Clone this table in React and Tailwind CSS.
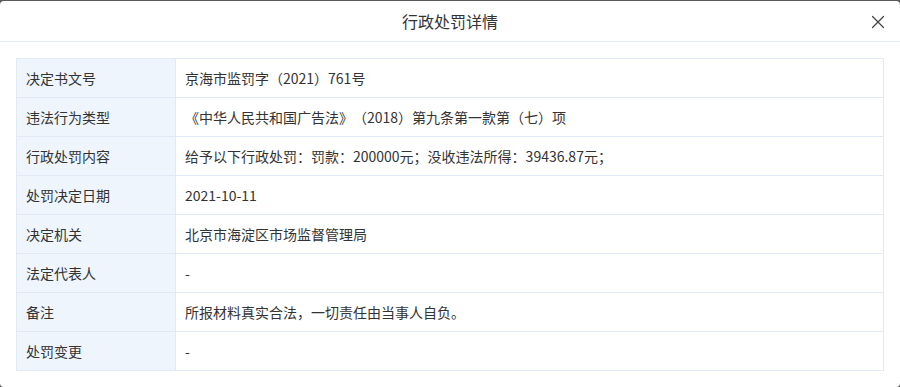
import { X } from 'lucide-react'

// Detail rows
const rows = [
    ['决定书文号', '京海市监罚字（2021）761号'],
    ['违法行为类型', '《中华人民共和国广告法》（2018）第九条第一款第（七）项'],
    ['行政处罚内容', '给予以下行政处罚：罚款：200000元；没收违法所得：39436.87元；'],
    ['处罚决定日期', '2021-10-11'],
    ['决定机关', '北京市海淀区市场监督管理局'],
    ['法定代表人', '-'],
    ['备注', '所报材料真实合法，一切责任由当事人自负。'],
    ['处罚变更', '-'],
]

function App() {
    return (
        <div
            className="h-[387px] w-[900px] bg-[#5a5a5a] pt-px [text-spacing-trim:space-all]"
            style={{ fontFamily: '"Noto Sans CJK SC", "Noto Sans", sans-serif' }}
        >
            <div className="h-full bg-white rounded-[4px] flex flex-col">
                {/* Header */}
                <div className="relative h-[41px] border-b border-[#e9eef3] flex items-center justify-center">
                    <h1 className="text-[16px] text-[#333]">行政处罚详情</h1>
                    <button className="absolute right-[11px] top-[10px] text-[#444]">
                        <X size={22} strokeWidth={1.3} />
                    </button>
                </div>

                {/* Table */}
                <div className="px-4 pt-4">
                    <div className="border-t border-x border-[#dfeaf6]">
                        {rows.map(([label, value]) => (
                            <div key={label} className="flex h-[39px] border-b border-[#dfeaf6]">
                                <div className="w-[159px] bg-[#eef5fd] border-r border-[#dfeaf6] px-[9px] flex items-center text-[14px] text-[#333]">
                                    {label}
                                </div>
                                <div className="flex-1 px-[9px] flex items-center text-[14px] text-[#333]">
                                    {value}
                                </div>
                            </div>
                        ))}
                    </div>
                </div>
            </div>
        </div>
    )
}

export default App
